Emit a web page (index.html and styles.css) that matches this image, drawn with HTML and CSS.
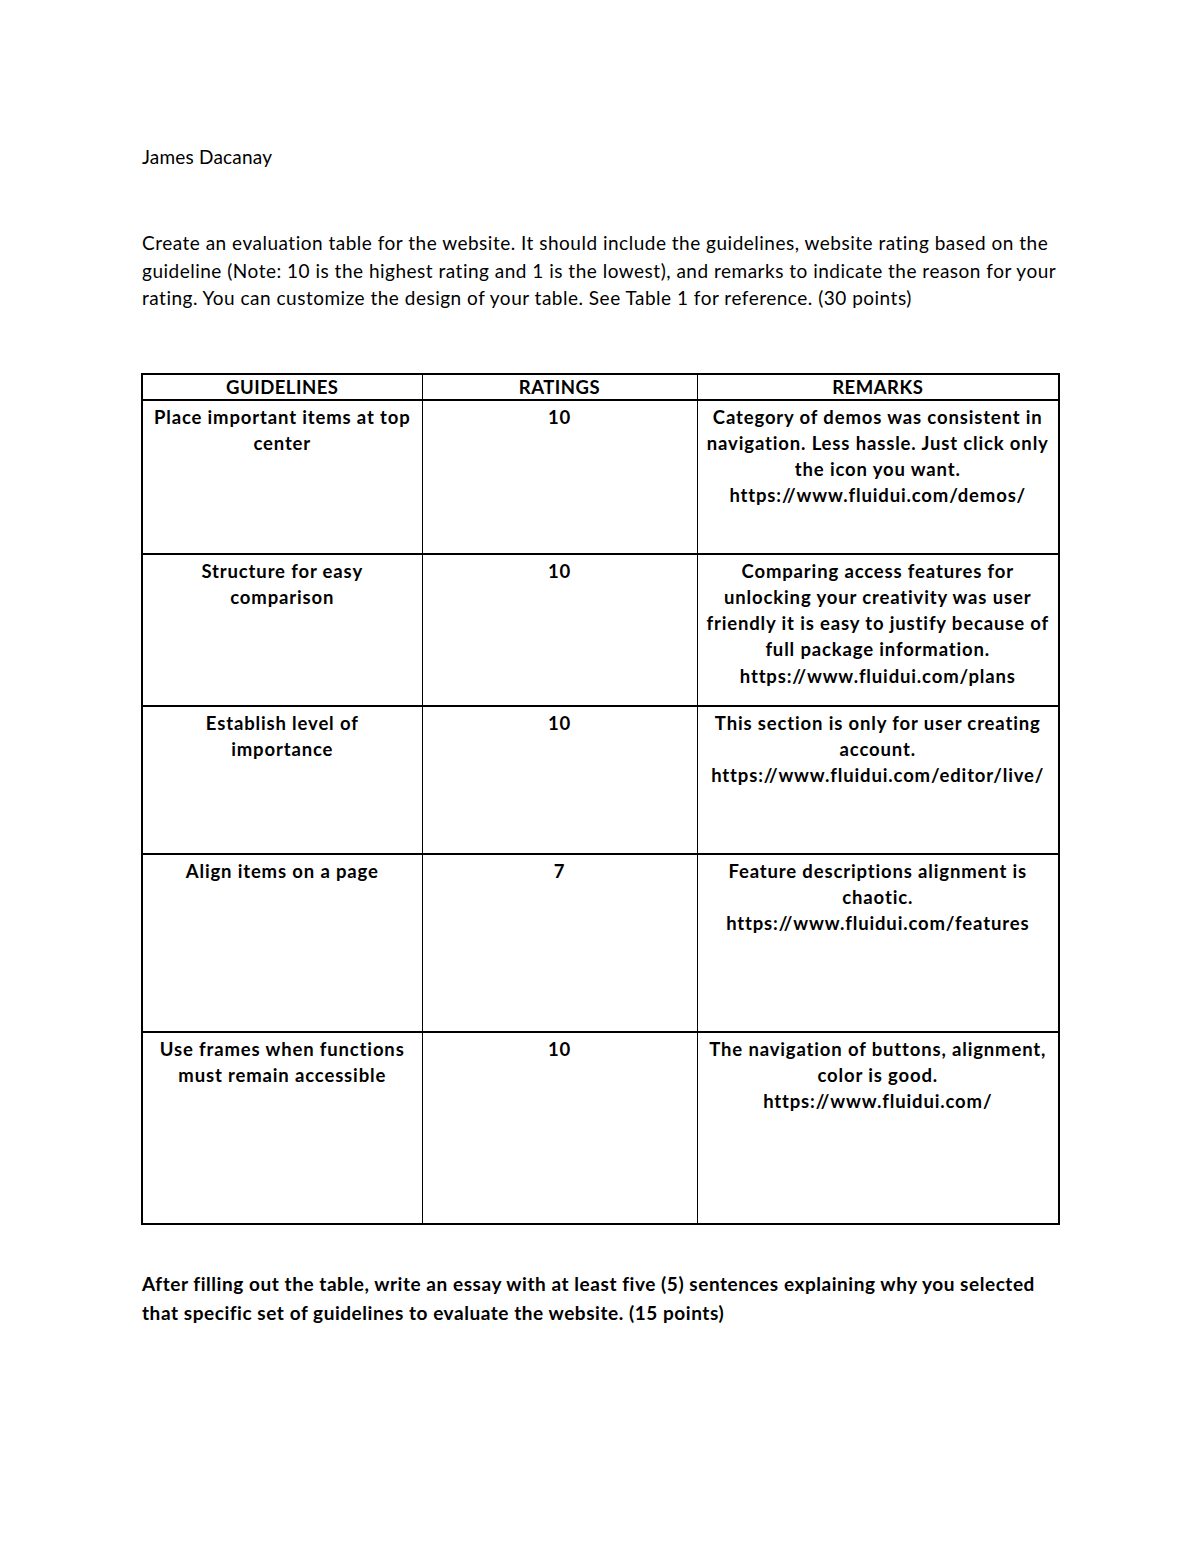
FILE: index.html
```html
<!DOCTYPE html>
<html>
<head>
<meta charset="utf-8">
<link rel="stylesheet" href="styles.css">
</head>
<body>
<div class="page">
  <p class="name">James Dacanay</p>
  <p class="intro">Create an evaluation table for the website. It should include the guidelines, website rating based on the<br>guideline (Note: 10 is the highest rating and 1 is the lowest), and remarks to indicate the reason for your<br>rating. You can customize the design of your table. See Table 1 for reference. (30 points)</p>
  <table class="eval">
    <colgroup><col class="c1"><col class="c2"><col class="c3"></colgroup>
    <tr class="head"><th>GUIDELINES</th><th>RATINGS</th><th>REMARKS</th></tr>
    <tr class="r1"><td>Place important items at top<br>center</td><td>10</td><td>Category of demos was consistent in<br>navigation. Less hassle. Just click only<br>the icon you want.<br>https://www.fluidui.com/demos/</td></tr>
    <tr class="r2"><td>Structure for easy<br>comparison</td><td>10</td><td>Comparing access features for<br>unlocking your creativity was user<br>friendly it is easy to justify because of<br>full package information.<br>https://www.fluidui.com/plans</td></tr>
    <tr class="r3"><td>Establish level of<br>importance</td><td>10</td><td>This section is only for user creating<br>account.<br>https://www.fluidui.com/editor/live/</td></tr>
    <tr class="r4"><td>Align items on a page</td><td>7</td><td>Feature descriptions alignment is<br>chaotic.<br>https://www.fluidui.com/features</td></tr>
    <tr class="r5"><td>Use frames when functions<br>must remain accessible</td><td>10</td><td>The navigation of buttons, alignment,<br>color is good.<br>https://www.fluidui.com/</td></tr>
  </table>
  <p class="essay">After filling out the table, write an essay with at least five (5) sentences explaining why you selected<br>that specific set of guidelines to evaluate the website. (15 points)</p>
</div>
</body>
</html>
```
FILE: styles.css
```css
html, body {
  margin: 0;
  padding: 0;
  background: #fff;
}
body {
  font-family: Lato, "Open Sans", sans-serif;
  color: #000;
  font-size: 19px;
}
.page {
  width: 1200px;
  height: 1553px;
  padding: 143px 0 0 142px;
  box-sizing: border-box;
}
.name {
  margin: 0;
  line-height: 27px;
  letter-spacing: 0.2px;
}
.intro {
  margin: 59px 0 0 0;
  line-height: 27.5px;
  white-space: nowrap;
  letter-spacing: 0.5px;
}
.eval {
  margin-top: 61px;
  margin-left: -1px;
  border-collapse: collapse;
  border: 2px solid #000;
  width: 917px;
  table-layout: fixed;
}
.c1 { width: 280px; }
.c2 { width: 275px; }
.c3 { width: 362px; }
.eval th, .eval td {
  border: 1px solid #000;
  text-align: center;
  vertical-align: top;
  font-weight: 700;
  padding: 3px 2px 0 2px;
  line-height: 26.3px;
  white-space: nowrap;
  font-size: 18.5px;
  letter-spacing: 0.85px;
}
.eval th {
  padding: 0 2px;
  height: 24px;
  line-height: 24px;
  vertical-align: middle;
  letter-spacing: 0.5px;
}
.eval tr.r1 { height: 154px; }
.eval tr.r2 { height: 152px; }
.eval tr.r3 { height: 148px; }
.eval tr.r4 { height: 178px; }
.eval tr.r5 { height: 192px; }
.eval tr.r1 td, .eval tr.r2 td, .eval tr.r3 td, .eval tr.r4 td, .eval tr.r5 td {
  border-top-width: 2px;
}
.essay {
  margin: 44px 0 0 0;
  font-weight: 700;
  line-height: 29px;
  white-space: nowrap;
  letter-spacing: 0.55px;
}
```
